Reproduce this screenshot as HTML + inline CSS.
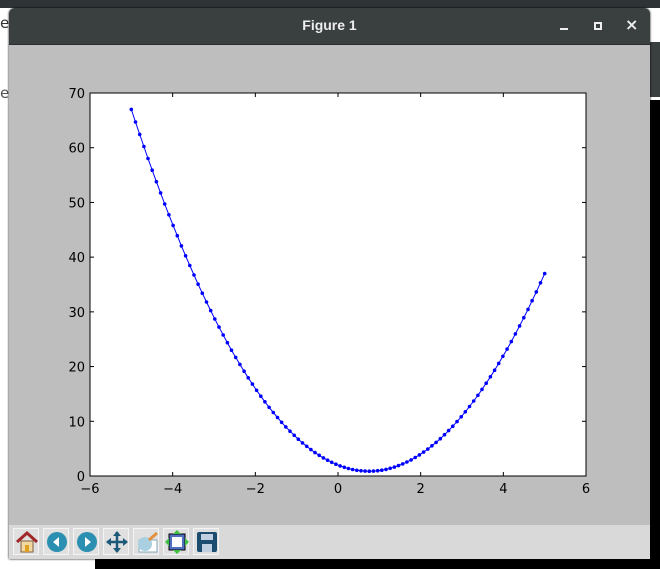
<!DOCTYPE html>
<html><head><meta charset="utf-8"><style>
body{margin:0;width:660px;height:569px;overflow:hidden;background:#fff;position:relative;font-family:"DejaVu Sans","Liberation Sans",sans-serif}
.abs{position:absolute}
.b{position:absolute;top:0;width:26px;height:27px;background:#e0e0e0;border:1px solid #f4f4f4;box-sizing:border-box}
.b svg{position:absolute;left:1px;top:1px}
</style></head><body>
<div class="abs" style="left:0;top:0;width:660px;height:8px;background:#2e3436"></div>
<div class="abs" style="left:650px;top:42px;width:10px;height:55px;background:#3a3f3f"></div>
<div class="abs" style="left:650px;top:100px;width:10px;height:469px;background:#000"></div>
<div class="abs" style="left:95px;top:559px;width:565px;height:10px;background:#000"></div>
<div class="abs" style="left:0;top:14px;font-size:15px;color:#333">e</div>
<div class="abs" style="left:0;top:84px;font-size:15px;color:#555">ex</div>
<div class="abs" style="left:9px;top:8px;width:641px;height:551px;background:#bebebe;border-radius:6px 6px 0 0;box-shadow:0 0 2px #000;overflow:hidden">
 <div class="abs" style="left:0;top:0;width:641px;height:36px;background:#3a3f3f;border-bottom:1px solid #2a2e2e"></div>
 <div class="abs" style="left:0;top:9px;width:641px;text-align:center;color:#eee;font-size:14px;font-weight:bold;font-family:'Liberation Sans',sans-serif">Figure 1</div>
 <div class="abs" style="left:551px;top:20px;width:8px;height:2px;background:#eee"></div>
 <div class="abs" style="left:585px;top:14px;width:4px;height:4px;border:2px solid #eee"></div>
 <div class="abs" style="left:616px;top:7px;color:#eee;font-size:16px;font-weight:bold">×</div>
 <div class="abs" style="left:0;top:517px;width:641px;height:34px;background:#d9d9d9"></div>
</div>
<div class="abs" style="left:13px;top:528px">
 <div class="b" style="left:0"><svg width="24" height="24"><path d="M2 12 L12 3 L22 12" fill="none" stroke="#a02828" stroke-width="3"/><rect x="6" y="11" width="12" height="11" fill="#f0d8a0" stroke="#806040"/><rect x="10" y="15" width="4" height="7" fill="#e0a020"/></svg></div>
 <div class="b" style="left:30px"><svg width="24" height="24"><circle cx="12" cy="12" r="10" fill="#2a8fb0"/><path d="M14 7 L8 12 L14 17Z" fill="#fff"/></svg></div>
 <div class="b" style="left:60px"><svg width="24" height="24"><circle cx="12" cy="12" r="10" fill="#2a8fb0"/><path d="M10 7 L16 12 L10 17Z" fill="#fff"/></svg></div>
 <div class="b" style="left:90px"><svg width="24" height="24"><path d="M12 2 V22 M2 12 H22" stroke="#1d5a7a" stroke-width="2.5"/><path d="M12 1 L8 6 H16Z M12 23 L8 18 H16Z M1 12 L6 8 V16Z M23 12 L18 8 V16Z" fill="#1d5a7a"/></svg></div>
 <div class="b" style="left:120px"><svg width="24" height="24"><rect x="4" y="10" width="18" height="12" fill="#fff" stroke="#8ab"/><circle cx="10" cy="14" r="7" fill="#a8d0e0"/><path d="M14 10 L22 3" stroke="#e09040" stroke-width="3"/></svg></div>
 <div class="b" style="left:150px"><svg width="24" height="24"><rect x="4" y="4" width="16" height="16" fill="#5070c0" stroke="#000"/><rect x="7" y="7" width="10" height="10" fill="#fff"/><path d="M12 0 L8 4 H16Z M12 24 L8 20 H16Z M0 12 L4 8 V16Z M24 12 L20 8 V16Z" fill="#40c040"/></svg></div>
 <div class="b" style="left:180px"><svg width="24" height="24"><rect x="2" y="2" width="20" height="20" rx="2" fill="#1d4d6e"/><rect x="6" y="4" width="12" height="6" fill="#c0d0e0"/><rect x="7" y="14" width="10" height="8" fill="#c0d0e0"/></svg></div>
</div>
<svg class="abs" style="left:0;top:0" width="660" height="569" id="plot">
<rect x="90" y="93" width="496" height="383" fill="#fff" stroke="#000" stroke-width="1"/>
</svg>
<script>
var s=document.getElementById('plot'),h='';
function X(x){return 90+(x+6)/12*496}function Y(y){return 476-y/70*383}
for(var x=-6;x<=6;x+=2){var px=X(x);h+='<line x1="'+px+'" y1="476" x2="'+px+'" y2="472" stroke="#000"/><line x1="'+px+'" y1="93" x2="'+px+'" y2="97" stroke="#000"/>';
h+='<text x="'+px+'" y="493" font-size="13" text-anchor="middle" font-family="DejaVu Sans,sans-serif">'+(x<0?'\u2212'+(-x):x)+'</text>';}
for(var y=0;y<=70;y+=10){var py=Y(y);h+='<line x1="90" y1="'+py+'" x2="94" y2="'+py+'" stroke="#000"/><line x1="586" y1="'+py+'" x2="582" y2="'+py+'" stroke="#000"/>';
h+='<text x="85" y="'+(py+5)+'" font-size="13" text-anchor="end" font-family="DejaVu Sans,sans-serif">'+y+'</text>';}
var pts=[];for(var i=0;i<100;i++){var x=-5+10*i/99;var y=2*x*x-3*x+2;pts.push(X(x).toFixed(1)+','+Y(y).toFixed(1));}
h+='<polyline fill="none" stroke="#0000ff" stroke-width="1" points="'+pts.join(' ')+'"/>';
pts.forEach(function(p){var a=p.split(',');h+='<circle cx="'+a[0]+'" cy="'+a[1]+'" r="1.8" fill="#0000ff"/>';});
s.innerHTML+=h;
</script>
</body></html>
